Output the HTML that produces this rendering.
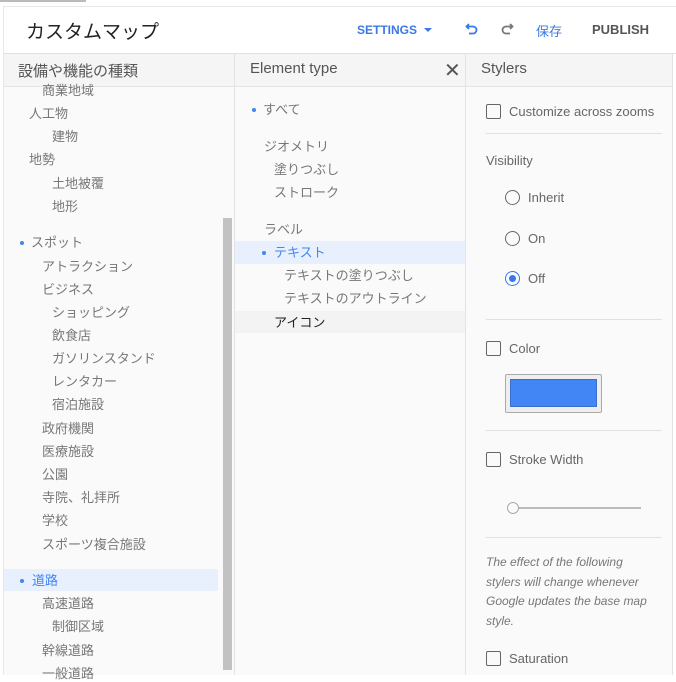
<!DOCTYPE html>
<html><head><meta charset="utf-8"><style>
*{margin:0;padding:0;box-sizing:border-box}
body{width:676px;height:675px;overflow:hidden;background:#fff;font-family:"Liberation Sans","Noto Sans CJK JP",sans-serif;position:relative;color:#666}
.a{position:absolute;white-space:nowrap}
.t{font-size:13px;line-height:16px;color:#777;margin-top:1px}
.b{color:#4285f4}
.dot{position:absolute;width:4px;height:4px;border-radius:50%;background:#4285f4}
.cb{position:absolute;width:15px;height:15px;border:1.5px solid #666;border-radius:2px}
.rd{position:absolute;width:15px;height:15px;border:1.5px solid #666;border-radius:50%}
.sep{position:absolute;height:1px;background:#e0e0e0;left:486px;width:176px}
.e{font-size:13px;color:#666}
</style></head><body>
<div class="a" style="left:0;top:0;width:86px;height:2px;background:#bbb"></div>
<div class="a" style="left:3px;top:6px;width:673px;height:1px;background:#e8e8e8"></div>
<div class="a" style="left:3px;top:6px;width:1px;height:669px;background:#e8e8e8"></div>
<div class="a" style="left:26px;top:17px;font-size:19px;color:#222">カスタムマップ</div>
<div class="a" style="left:357px;top:23px;font-size:12px;font-weight:bold;color:#3b78e7">SETTINGS</div>
<div class="a" style="left:424px;top:28px;border:4px solid transparent;border-top:4px solid #3b78e7;border-bottom:0"></div>
<svg class="a" style="left:465px;top:23px" width="14" height="14" viewBox="0 0 14 14"><path d="M4 1 L1.5 3.5 L4 6 M1.5 3.5 H8 A3.5 3.5 0 0 1 8 10.5 H4" fill="none" stroke="#3b78e7" stroke-width="1.8"/></svg>
<svg class="a" style="left:500px;top:23px" width="14" height="14" viewBox="0 0 14 14"><path d="M10 1 L12.5 3.5 L10 6 M12.5 3.5 H6 A3.5 3.5 0 0 0 6 10.5 H10" fill="none" stroke="#777" stroke-width="1.8"/></svg>
<div class="a" style="left:536px;top:21px;font-size:13px;color:#3b78e7">保存</div>
<div class="a" style="left:592px;top:22px;font-size:13px;font-weight:bold;color:#555">PUBLISH</div>
<div class="a" style="left:4px;top:53px;width:672px;height:1px;background:#e0e0e0"></div>
<div class="a" style="left:4px;top:54px;width:668px;height:32px;background:#f5f5f5"></div>
<div class="a" style="left:4px;top:86px;width:668px;height:1px;background:#e3e3e3"></div>
<div class="a" style="left:4px;top:87px;width:230px;height:588px;background:#fafafa"></div>
<div class="a" style="left:235px;top:87px;width:230px;height:588px;background:#fafafa"></div>
<div class="a" style="left:466px;top:87px;width:206px;height:588px;background:#fafafa"></div>
<div class="a" style="left:234px;top:54px;width:1px;height:621px;background:#e3e3e3"></div>
<div class="a" style="left:465px;top:54px;width:1px;height:621px;background:#e3e3e3"></div>
<div class="a" style="left:672px;top:54px;width:1px;height:621px;background:#e3e3e3"></div>
<div class="a" style="left:18px;top:60px;font-size:15px;color:#555">設備や機能の種類</div>
<div class="a" style="left:250px;top:60px;font-size:15px;color:#555">Element type</div>
<div class="a" style="left:444px;top:58px;font-size:20px;color:#555">✕</div>
<div class="a" style="left:481px;top:60px;font-size:15px;color:#555">Stylers</div>
<div class="a" style="left:223px;top:218px;width:9px;height:452px;background:#c2c2c2"></div>
<div class="a" style="left:4px;top:569px;width:214px;height:22px;background:#e8f0fe"></div>
<div class="a t" style="left:42px;top:82px">商業地域</div>
<div class="a t" style="left:29px;top:105px">人工物</div>
<div class="a t" style="left:52px;top:128px">建物</div>
<div class="a t" style="left:29px;top:151px">地勢</div>
<div class="a t" style="left:52px;top:175px">土地被覆</div>
<div class="a t" style="left:52px;top:198px">地形</div>
<div class="dot" style="left:20px;top:241px"></div>
<div class="a t" style="left:31px;top:234px">スポット</div>
<div class="a t" style="left:42px;top:258px">アトラクション</div>
<div class="a t" style="left:42px;top:281px">ビジネス</div>
<div class="a t" style="left:52px;top:304px">ショッピング</div>
<div class="a t" style="left:52px;top:327px">飲食店</div>
<div class="a t" style="left:52px;top:350px">ガソリンスタンド</div>
<div class="a t" style="left:52px;top:373px">レンタカー</div>
<div class="a t" style="left:52px;top:396px">宿泊施設</div>
<div class="a t" style="left:42px;top:420px">政府機関</div>
<div class="a t" style="left:42px;top:443px">医療施設</div>
<div class="a t" style="left:42px;top:466px">公園</div>
<div class="a t" style="left:42px;top:489px">寺院、礼拝所</div>
<div class="a t" style="left:42px;top:512px">学校</div>
<div class="a t" style="left:42px;top:536px">スポーツ複合施設</div>
<div class="dot" style="left:20px;top:579px"></div>
<div class="a t b" style="left:32px;top:572px">道路</div>
<div class="a t" style="left:42px;top:595px">高速道路</div>
<div class="a t" style="left:52px;top:618px">制御区域</div>
<div class="a t" style="left:42px;top:642px">幹線道路</div>
<div class="a t" style="left:42px;top:665px">一般道路</div>
<div class="dot" style="left:252px;top:108px"></div>
<div class="a t" style="left:263px;top:101px">すべて</div>
<div class="a t" style="left:264px;top:138px">ジオメトリ</div>
<div class="a t" style="left:274px;top:161px">塗りつぶし</div>
<div class="a t" style="left:274px;top:184px">ストローク</div>
<div class="a t" style="left:264px;top:221px">ラベル</div>
<div class="a" style="left:235px;top:241px;width:230px;height:23px;background:#e8f0fe"></div>
<div class="dot" style="left:262px;top:251px"></div>
<div class="a t b" style="left:274px;top:244px">テキスト</div>
<div class="a t" style="left:284px;top:267px">テキストの塗りつぶし</div>
<div class="a t" style="left:284px;top:290px">テキストのアウトライン</div>
<div class="a" style="left:235px;top:311px;width:230px;height:22px;background:#f3f3f3"></div>
<div class="a t" style="left:274px;top:314px;color:#222">アイコン</div>
<div class="cb" style="left:486px;top:104px"></div>
<div class="a e" style="left:509px;top:104px">Customize across zooms</div>
<div class="sep" style="top:133px"></div>
<div class="a e" style="left:486px;top:153px">Visibility</div>
<div class="rd" style="left:505px;top:190px"></div>
<div class="a e" style="left:528px;top:190px">Inherit</div>
<div class="rd" style="left:505px;top:231px"></div>
<div class="a e" style="left:528px;top:231px">On</div>
<div class="rd" style="left:505px;top:271px;border-color:#3b78e7"></div>
<div class="a" style="left:509px;top:275px;width:7px;height:7px;border-radius:50%;background:#3b78e7"></div>
<div class="a e" style="left:528px;top:271px">Off</div>
<div class="sep" style="top:319px"></div>
<div class="cb" style="left:486px;top:341px"></div>
<div class="a e" style="left:509px;top:341px">Color</div>
<div class="a" style="left:505px;top:374px;width:97px;height:39px;border:1px solid #aaa;background:#eee;border-radius:2px"></div>
<div class="a" style="left:510px;top:379px;width:87px;height:28px;background:#4285f4;border:1px solid #3a6fcc"></div>
<div class="sep" style="top:430px"></div>
<div class="cb" style="left:486px;top:452px"></div>
<div class="a e" style="left:509px;top:452px">Stroke Width</div>
<div class="a" style="left:518px;top:507px;width:123px;height:2px;background:#bbb"></div>
<div class="a" style="left:507px;top:502px;width:12px;height:12px;border-radius:50%;border:1.5px solid #aaa;background:#fafafa"></div>
<div class="sep" style="top:537px"></div>
<div class="a" style="left:486px;top:553px;font-size:12px;line-height:19.5px;font-style:italic;color:#777;white-space:normal;width:170px">The effect of the following stylers will change whenever Google updates the base map style.</div>
<div class="cb" style="left:486px;top:651px"></div>
<div class="a e" style="left:509px;top:651px">Saturation</div>
</body></html>
